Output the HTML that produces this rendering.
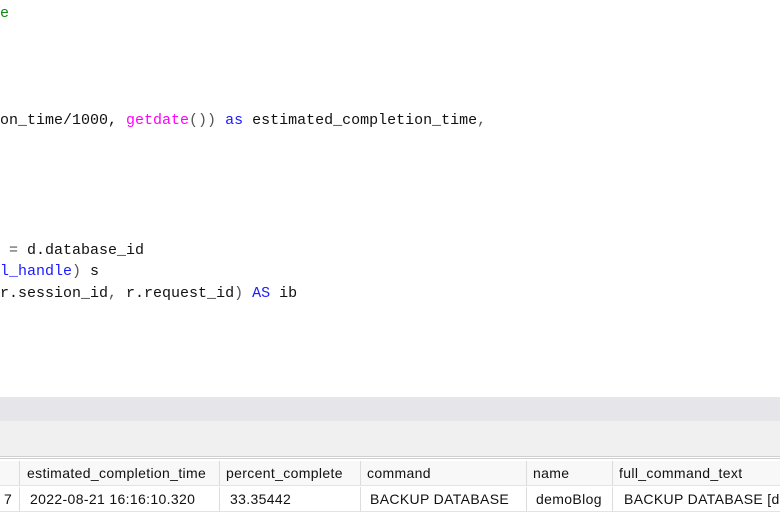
<!DOCTYPE html>
<html><head><meta charset="utf-8"><style>
body{margin:0;width:780px;height:520px;overflow:hidden;background:#fff;position:relative;font-family:"Liberation Sans",sans-serif}
.code{position:absolute;left:0;font-family:"Liberation Mono",monospace;font-size:15px;color:#111;white-space:pre;line-height:18px}
.kw{color:#1a1aff}.fn{color:#ff00ff}.gr{color:#555}.cm{color:#118811}
.bar1{position:absolute;left:0;top:397px;width:780px;height:24px;background:#e6e6ea}
.bar2{position:absolute;left:0;top:421px;width:780px;height:35px;background:#f0f0f0}
.grid{position:absolute;left:0;top:456px;width:780px;height:64px;background:#fff;border-top:3px double #cfcfcf}
.c{position:absolute;height:25px;line-height:25px;font-size:14px;color:#111;border-right:1px solid #dcdcdc;border-bottom:1px solid #e3e3e3;letter-spacing:0.35px;box-sizing:border-box;white-space:nowrap;overflow:hidden}
.h{background:#f8f8f8;top:2px}
.r{top:28px}
</style></head><body>
<div class="code cm" style="top:5px">e</div>
<div class="code" style="top:112px">on_time/1000, <span class="fn">getdate</span><span class="gr">())</span> <span class="kw">as</span> estimated_completion_time<span class="gr">,</span></div>
<div class="code" style="top:242px"> <span class="gr">=</span> d.database_id</div>
<div class="code" style="top:263px"><span class="kw">l_handle</span><span class="gr">)</span> s</div>
<div class="code" style="top:285px">r.session_id<span class="gr">,</span> r.request_id<span class="gr">)</span> <span class="kw">AS</span> ib</div>
<div class="bar1"></div><div class="bar2"></div>
<div class="grid">
<div class="c h" style="left:0;width:20px"></div>
<div class="c h" style="left:20px;width:200px;padding-left:7px">estimated_completion_time</div>
<div class="c h" style="left:220px;width:141px;padding-left:6px">percent_complete</div>
<div class="c h" style="left:361px;width:166px;padding-left:6px">command</div>
<div class="c h" style="left:527px;width:86px;padding-left:6px">name</div>
<div class="c h" style="left:613px;width:167px;padding-left:6px;border-right:none">full_command_text</div>
<div class="c r" style="left:0;width:20px;padding-left:4px">7</div>
<div class="c r" style="left:20px;width:200px;padding-left:10px">2022-08-21 16:16:10.320</div>
<div class="c r" style="left:220px;width:141px;padding-left:10px">33.35442</div>
<div class="c r" style="left:361px;width:166px;padding-left:9px">BACKUP DATABASE</div>
<div class="c r" style="left:527px;width:86px;padding-left:9px">demoBlog</div>
<div class="c r" style="left:613px;width:167px;padding-left:11px;border-right:none">BACKUP DATABASE [d</div>
</div>
</body></html>
